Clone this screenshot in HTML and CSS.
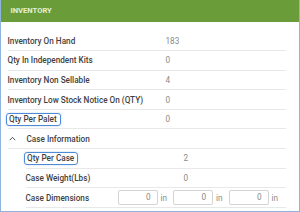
FILE: index.html
```html
<!DOCTYPE html>
<html lang="en">
<head>
    <meta charset="UTF-8">
    <meta name="viewport" content="width=device-width, initial-scale=1.0">
    <title>Inventory</title>
    <link rel="stylesheet" href="styles.css">
</head>
<body>
    <div class="panel">
        <div class="panel-head">INVENTORY</div>
        <div class="panel-body">
            <div class="row">
                <span class="label">Inventory On Hand</span>
                <span class="value">183</span>
            </div>
            <div class="row">
                <span class="label">Qty In Independent Kits</span>
                <span class="value">0</span>
            </div>
            <div class="row">
                <span class="label">Inventory Non Sellable</span>
                <span class="value">4</span>
            </div>
            <div class="row">
                <span class="label">Inventory Low Stock Notice On (QTY)</span>
                <span class="value">0</span>
            </div>
            <div class="row">
                <span class="label"><span class="mark">Qty Per Palet</span></span>
                <span class="value">0</span>
            </div>
            <div class="row group-row">
                <svg class="caret" width="7" height="5" viewBox="0 0 7 5">
                    <path d="M0.8 4.2 L3.5 1.3 L6.2 4.2" fill="none" stroke="#555" stroke-width="1"/>
                </svg>
                <span class="label">Case Information</span>
            </div>
            <div class="sub">
                <div class="row">
                    <span class="label"><span class="mark">Qty Per Case</span></span>
                    <span class="value">2</span>
                </div>
                <div class="row">
                    <span class="label">Case Weight(Lbs)</span>
                    <span class="value">0</span>
                </div>
                <div class="row dims-row">
                    <span class="label">Case Dimensions</span>
                    <div class="dims">
                        <span class="box">0</span><span class="unit">in</span>
                        <span class="box">0</span><span class="unit">in</span>
                        <span class="box">0</span><span class="unit">in</span>
                    </div>
                </div>
            </div>
        </div>
    </div>
</body>
</html>
```

FILE: styles.css
```css
body {
    margin: 0;
    font-family: Roboto, "Liberation Sans", sans-serif;
    background: #fff;
}
.panel {
    width: 300px;
    height: 212px;
    box-sizing: border-box;
    border: 1.5px solid #8fb5de;
    border-top: none;
    overflow: hidden;
}
.panel-head {
    height: 22px;
    background-color: #6a9d39;
    color: #e4f1d6;
    font-size: 7.6px;
    font-weight: 700;
    line-height: 22px;
    padding-left: 9.5px;
}
.panel-body {
    padding: 9.5px 13px 0 6.5px;
}
.row {
    display: grid;
    grid-template-columns: 158px 1fr;
    align-items: center;
    height: 19.6px;
    box-sizing: border-box;
    border-bottom: 1px solid #e8e8e8;
    font-size: 8.2px;
}
.label {
    color: #3f3f3f;
    font-weight: 500;
}
.value {
    color: #8a8a8a;
}
.mark {
    display: inline-block;
    border: 1.5px solid #4f8ad6;
    border-radius: 3px;
    padding: 0.5px 3px 0.5px 2px;
    margin-left: -1.5px;
    box-shadow: 0 0 2px rgba(79,138,214,0.4);
}
.group-row {
    grid-template-columns: 19px 1fr;
}
.caret {
    margin-left: 1px;
}
.sub {
    padding-left: 18px;
}
.dims-row {
    grid-template-columns: 92px 1fr;
}
.dims {
    display: flex;
    align-items: center;
}
.box {
    width: 40px;
    height: 15px;
    box-sizing: border-box;
    border: 1px solid #d4d4d4;
    border-radius: 2px;
    color: #8a8a8a;
    text-align: right;
    padding-right: 6px;
    line-height: 13px;
}
.unit {
    color: #8a8a8a;
    margin: 0 6px 0 3px;
}
```
